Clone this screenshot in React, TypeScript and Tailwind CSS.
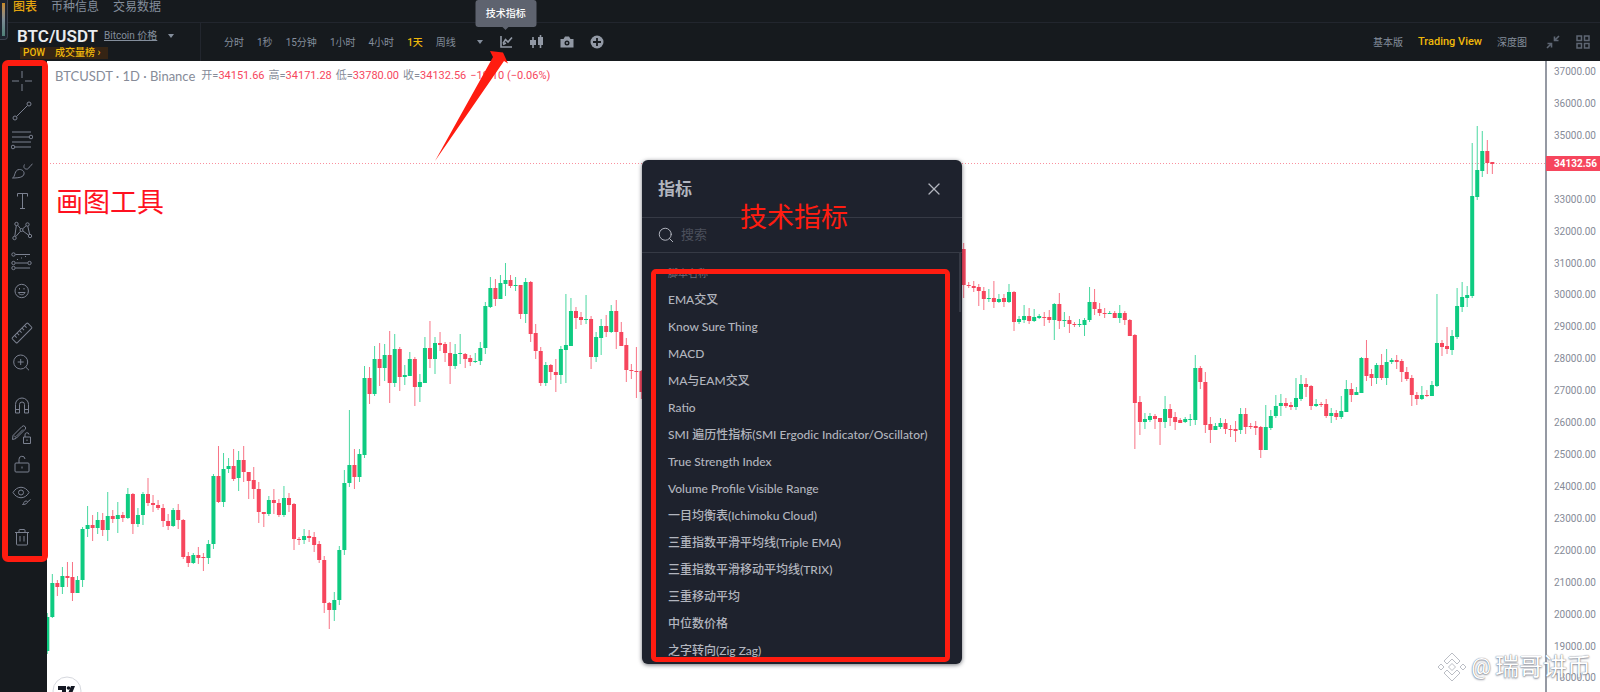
import React, { useState } from 'react'
import { Search, X } from 'lucide-react'

type Bar = [dir: 0 | 1, high: number, top: number, bottom: number, low: number]

const UP = '#0ecb81'
const DOWN = '#f6465d'
const BAR_STEP = 5.035
const FIRST_BAR_X = 0.3

// each run starts at a bar index, 1 = rising bar, 0 = falling bar
const runs: { from: number; bars: Bar[] }[] = [
  {
    from: 0,
    bars: [
      [1, 613, 617, 651, 654], [1, 574, 583, 617, 618], [0, 580, 583, 587, 596], [1, 567, 576, 587, 594],
      [0, 562, 576, 578, 587], [0, 562, 577, 593, 601], [1, 576, 580, 593, 593], [1, 527, 529, 580, 587],
      [1, 506, 525, 529, 537], [0, 515, 525, 528, 541], [1, 512, 520, 528, 534], [0, 513, 520, 530, 536],
      [1, 492, 516, 530, 541], [0, 510, 516, 519, 523], [1, 502, 515, 519, 533], [0, 512, 515, 518, 522],
      [1, 488, 494, 518, 519], [0, 493, 494, 524, 534], [1, 508, 515, 524, 527], [1, 492, 494, 515, 525],
      [0, 478, 494, 503, 506], [0, 495, 503, 505, 512], [0, 500, 505, 508, 510], [0, 504, 508, 521, 527],
      [0, 514, 521, 526, 530], [1, 508, 510, 526, 527], [0, 504, 510, 520, 529], [0, 519, 520, 557, 559],
      [0, 552, 556, 563, 567], [1, 553, 555, 563, 564], [0, 547, 555, 558, 564], [0, 553, 557, 558, 571],
      [1, 540, 544, 558, 564], [1, 474, 476, 544, 549], [0, 446, 476, 502, 503], [1, 453, 469, 502, 507],
      [1, 458, 466, 469, 473], [0, 449, 466, 479, 481], [1, 451, 460, 478, 491], [0, 446, 460, 472, 482],
      [0, 472, 472, 481, 499], [0, 467, 480, 489, 499], [0, 482, 489, 512, 523], [0, 512, 512, 514, 527],
      [1, 496, 500, 514, 516], [0, 489, 500, 503, 514], [0, 499, 503, 515, 517], [1, 486, 498, 515, 517],
      [0, 493, 498, 505, 512], [0, 503, 504, 539, 550], [0, 537, 539, 540, 545], [1, 529, 536, 540, 544],
      [0, 530, 536, 538, 542], [0, 532, 537, 545, 552], [0, 541, 544, 560, 563], [0, 556, 560, 603, 613],
      [0, 602, 603, 610, 629], [1, 592, 600, 610, 621], [1, 546, 550, 600, 605], [1, 470, 483, 550, 555],
      [1, 410, 465, 483, 487], [0, 449, 465, 477, 489], [1, 449, 454, 477, 482], [1, 366, 378, 455, 458],
      [0, 367, 378, 394, 404], [1, 346, 359, 394, 396], [0, 343, 359, 368, 386], [1, 344, 355, 368, 381],
      [0, 331, 355, 383, 403], [1, 334, 349, 383, 387], [0, 347, 349, 377, 391], [1, 365, 375, 377, 385],
      [1, 352, 359, 376, 376], [0, 357, 359, 387, 406], [1, 374, 382, 387, 402], [1, 337, 348, 383, 383],
      [0, 321, 348, 359, 368], [1, 337, 343, 359, 374], [0, 332, 343, 345, 351], [0, 342, 344, 353, 362],
      [0, 342, 353, 366, 384], [1, 344, 354, 366, 369], [1, 334, 353, 354, 364], [0, 353, 354, 359, 368],
      [0, 355, 358, 362, 366], [1, 353, 361, 362, 363], [1, 342, 348, 361, 365], [1, 302, 306, 348, 354],
      [1, 277, 288, 307, 308], [0, 279, 288, 299, 306], [1, 275, 283, 299, 299], [1, 263, 280, 284, 296],
      [0, 275, 280, 286, 288], [1, 277, 285, 286, 291], [0, 285, 285, 314, 319], [1, 278, 282, 314, 323],
      [0, 281, 282, 334, 342], [0, 324, 333, 351, 359], [0, 347, 351, 383, 386], [1, 362, 365, 383, 386],
      [0, 364, 365, 372, 380], [0, 359, 372, 375, 392], [1, 346, 349, 375, 384], [1, 294, 345, 350, 383],
      [1, 298, 311, 346, 346], [0, 307, 311, 318, 329], [0, 312, 317, 320, 325], [1, 295, 319, 320, 324],
      [0, 316, 319, 357, 369], [1, 332, 337, 357, 362], [1, 319, 326, 338, 355], [0, 315, 326, 332, 337],
      [1, 305, 311, 332, 333], [0, 300, 311, 332, 349], [0, 322, 332, 346, 346], [0, 338, 345, 370, 382],
      [0, 364, 370, 371, 379], [0, 347, 371, 372, 398], [0, 370, 371, 392, 399],
    ],
  },
  {
    from: 182,
    bars: [
      [0, 243, 249, 285, 298], [0, 282, 285, 286, 288], [0, 281, 286, 288, 292], [0, 284, 287, 291, 306],
      [0, 287, 291, 299, 310], [1, 289, 298, 299, 302], [0, 281, 298, 302, 308], [1, 294, 299, 302, 303],
      [0, 294, 298, 302, 307], [1, 284, 292, 302, 303], [0, 291, 292, 322, 331], [1, 316, 319, 322, 324],
      [1, 305, 316, 320, 323], [0, 308, 316, 321, 324], [1, 309, 317, 321, 322], [1, 314, 316, 318, 319],
      [0, 312, 317, 318, 326], [0, 310, 317, 320, 323], [1, 303, 304, 320, 340], [0, 293, 304, 321, 329],
      [1, 312, 320, 321, 327], [0, 316, 320, 324, 333], [0, 322, 324, 325, 327], [1, 319, 324, 325, 327],
      [1, 318, 320, 325, 336], [1, 287, 302, 320, 322], [0, 289, 302, 309, 315], [0, 303, 309, 313, 316],
      [0, 308, 313, 314, 318], [1, 311, 313, 314, 314], [0, 311, 313, 318, 318], [1, 305, 313, 318, 323],
      [0, 311, 313, 320, 325], [0, 319, 320, 336, 336], [0, 334, 335, 403, 449], [0, 396, 402, 422, 435],
      [1, 413, 419, 422, 429], [1, 413, 416, 420, 422], [0, 414, 416, 419, 429], [0, 418, 418, 422, 445],
      [1, 396, 409, 422, 428], [0, 404, 409, 418, 426], [0, 412, 417, 422, 430], [0, 418, 420, 423, 423],
      [1, 417, 419, 422, 423], [1, 414, 419, 420, 426], [1, 355, 368, 420, 425], [0, 366, 368, 382, 389],
      [0, 372, 382, 425, 433], [0, 417, 424, 430, 443], [1, 423, 426, 430, 430], [1, 418, 423, 427, 429],
      [0, 419, 423, 429, 434], [0, 425, 429, 430, 437], [0, 421, 429, 431, 442], [1, 408, 414, 430, 434],
      [0, 408, 414, 427, 434], [0, 423, 426, 427, 429], [0, 421, 426, 428, 435], [0, 426, 427, 450, 458],
      [1, 405, 427, 450, 450], [1, 410, 416, 428, 430], [1, 395, 406, 416, 418], [1, 394, 403, 406, 416],
      [0, 398, 403, 406, 408], [0, 402, 405, 407, 410], [1, 378, 398, 407, 410], [1, 375, 384, 399, 401],
      [0, 378, 384, 387, 397], [0, 385, 386, 406, 410], [1, 399, 404, 406, 407], [0, 402, 404, 405, 407],
      [0, 399, 404, 416, 418], [1, 408, 413, 416, 423], [0, 410, 413, 417, 420], [1, 396, 411, 417, 419],
      [1, 380, 389, 412, 412], [0, 383, 389, 395, 402], [1, 387, 392, 395, 395], [1, 357, 358, 393, 393],
      [0, 340, 358, 376, 381], [0, 369, 374, 378, 386], [1, 363, 365, 378, 384], [0, 354, 365, 378, 380],
      [1, 349, 362, 378, 385], [1, 358, 360, 362, 364], [0, 355, 360, 362, 369], [0, 359, 361, 372, 382],
      [0, 367, 372, 379, 381], [0, 375, 378, 395, 406], [0, 392, 395, 399, 405], [1, 386, 395, 399, 400],
      [0, 390, 395, 396, 397], [1, 381, 385, 396, 396], [1, 294, 343, 386, 387], [0, 340, 343, 347, 356],
      [0, 327, 346, 349, 354], [1, 330, 336, 350, 355], [1, 288, 306, 337, 339], [1, 282, 297, 307, 312],
      [1, 286, 295, 298, 307], [1, 143, 196, 296, 298], [1, 126, 170, 197, 200], [1, 131, 151, 171, 177],
      [0, 140, 151, 163, 174], [0, 162, 162, 164, 174],
    ],
  },
]

const indicators = [
  'EMA交叉',
  'Know Sure Thing',
  'MACD',
  'MA与EAM交叉',
  'Ratio',
  'SMI 遍历性指标(SMI Ergodic Indicator/Oscillator)',
  'True Strength Index',
  'Volume Profile Visible Range',
  '一目均衡表(Ichimoku Cloud)',
  '三重指数平滑平均线(Triple EMA)',
  '三重指数平滑移动平均线(TRIX)',
  '三重移动平均',
  '中位数价格',
  '之字转向(Zig Zag)',
]

const intervals = ['分时', '1秒', '15分钟', '1小时', '4小时', '1天', '周线']

const prices = Array.from({ length: 20 }, (_, i) => 37000 - i * 1000).filter((p) => p !== 34000)

const toolGroups: { label: string; icon: React.ReactNode }[][] = [
  [
    { label: '十字线', icon: <path d="M11 1v7M11 14v7M1 11h7M14 11h7" /> },
    {
      label: '趋势线',
      icon: (
        <>
          <circle cx="4" cy="18" r="2" />
          <circle cx="18" cy="4" r="2" />
          <path d="M5.5 16.5l11-11" />
        </>
      ),
    },
    {
      label: '斐波那契',
      icon: (
        <>
          <circle cx="20" cy="7" r="1.8" />
          <circle cx="2" cy="17" r="1.8" />
          <path d="M1 2h19M1 7h17M1 12h19M4 17h16" />
        </>
      ),
    },
    {
      label: '画笔',
      icon: <path d="M1.500 18c3-1 1.500-8.500 7-8.500 3 0 5 2 4.500 4.500-.6 3-4.500 4-11.500 4zM13.500 4.500c-1.500 3 0 5 3 4.500 1.500-.5 2.500-3.500 5-5" />,
    },
    { label: '文字', icon: <path d="M6.500 6.500v-3h10v3M11.500 3.500v15M9 18.500h5" /> },
    {
      label: '形态',
      icon: (
        <>
          <circle cx="5.500" cy="4" r="1.700" />
          <circle cx="16.500" cy="4.500" r="1.700" />
          <circle cx="10.500" cy="10" r="1.500" />
          <circle cx="3.500" cy="18" r="1.700" />
          <circle cx="19" cy="16" r="1.700" />
          <path d="M5.300 5.700L3.800 16.300M6.800 5.300l2.700 3.500M15.200 5.700l-3.600 3.200M16.800 6.200l1.800 8.100M9.500 11.200l-4.800 5.500M11.800 10.900l5.700 4.200" />
        </>
      ),
    },
    {
      label: '预测',
      icon: (
        <>
          <circle cx="2.500" cy="4.500" r="1.700" />
          <circle cx="2.500" cy="13" r="1.700" />
          <circle cx="18.500" cy="13" r="1.700" />
          <circle cx="2.500" cy="18" r="1.700" />
          <path d="M4.500 4.500h14.500M4.500 13h12M4.500 18h14.500" />
          <path d="M6 9.500h2M10 8h2M14 6.500h2" strokeDasharray="1 1" />
        </>
      ),
    },
    {
      label: '表情',
      icon: (
        <>
          <circle cx="10.700" cy="11" r="6.700" />
          <path d="M7.300 12.500c1.300 3 5.500 3 6.800 0z" />
          <path d="M8 8.800h1M12.500 8.800h1" strokeWidth="1.500" />
        </>
      ),
    },
  ],
  [
    {
      label: '测量',
      icon: (
        <g transform="rotate(-45 11 11)">
          <rect x="0" y="7.500" width="22" height="7" rx="1" />
          <path d="M4 7.500v3M7.500 7.500v3M11 7.500v3M14.500 7.500v3M18 7.500v3" />
        </g>
      ),
    },
    {
      label: '放大',
      icon: (
        <>
          <circle cx="9.700" cy="10" r="7" />
          <path d="M9.700 7v6M6.700 10h6M14.700 15l3.300 3.300" />
        </>
      ),
    },
  ],
  [
    {
      label: '磁铁',
      icon: <path d="M4.500 19v-8.500a6.500 6.500 0 0 1 13 0V19h-4v-8.500a2.500 2.500 0 0 0-5 0V19zM4.500 15.500h4M13.500 15.500h4" />,
    },
    {
      label: '保持绘图',
      icon: <path d="M1.500 15.500l.5-4 9-9a2 2 0 0 1 3 3l-9 9zM3 11.500l2.500 2.500M5 12.500l7-7M12.500 13h7v6.500h-7zM14 13v-2a2 2 0 0 1 4-.500M16 15.500v1.500" />,
    },
    {
      label: '锁定',
      icon: <path d="M5 9h12a1 1 0 0 1 1 1v7a1 1 0 0 1-1 1H5a1 1 0 0 1-1-1v-7a1 1 0 0 1 1-1zM8 9V5.500a3 3 0 0 1 6-.500M11 12.500v2" />,
    },
    {
      label: '隐藏',
      icon: (
        <>
          <path d="M2 8.500c4-7 12-7 16 0-4 7-12 7-16 0z" />
          <circle cx="10" cy="8.500" r="2.500" />
          <path d="M11.500 20.500c1.500-.5 1-3.500 3.500-3.500s2 3.500-3.500 3.500zM16.500 18l3-2.500" />
        </>
      ),
    },
  ],
  [
    {
      label: '删除',
      icon: <path d="M4 6.500h14M5.500 6.500V18a1 1 0 0 0 1 1h9a1 1 0 0 0 1-1V6.500M8 6.500v-2a1 1 0 0 1 1-1h4a1 1 0 0 1 1 1v2M9 10v5.500M13 10v5.500" />,
    },
  ],
]

function Caret() {
  return (
    <svg width="8" height="6" viewBox="0 0 8 6" fill="#848e9c">
      <path d="M1 1h6L4 5z" />
    </svg>
  )
}

function Header() {
  const [interval, setInterval] = useState('1天')

  return (
    <header className="relative shrink-0 bg-[#161a1e] text-[#848e9c]">
      <nav className="flex h-[23px] items-start gap-[14px] border-b border-[#22262e] pl-[13px] text-[12px] leading-[14px]">
        <a href="#chart" className="font-medium text-[#e5a50f]">图表</a>
        <a href="#info">币种信息</a>
        <a href="#data">交易数据</a>
      </nav>
      <div className="flex h-[38px] items-stretch">
        <div className="flex w-[201px] shrink-0 flex-col border-r border-[#22262e] pt-[2px] pl-[17px]">
          <div className="flex items-center">
            <h1 className="text-[17px] leading-[22px] font-semibold text-[#eaecef]">BTC/USDT</h1>
            <a href="#price" className="ml-[6px] text-[10px] leading-[16px] whitespace-nowrap underline">Bitcoin 价格</a>
            <button aria-label="选择交易对" className="ml-[10px]"><Caret /></button>
          </div>
          <div className="ml-[3px] flex h-3 w-[88px] items-center gap-[10px] bg-[#352414] pl-[3px] text-[10px] leading-[12px] font-medium text-[#f0b90b]">
            <a href="#pow">POW</a>
            <a href="#rank" className="whitespace-nowrap">成交量榜 ›</a>
          </div>
        </div>
        <div className="flex flex-1 items-center gap-[13px] pl-[23px] text-[10px] whitespace-nowrap">
          {intervals.map((item) => (
            <button
              key={item}
              onClick={() => setInterval(item)}
              className={item === interval ? 'font-medium text-[#f0b90b]' : ''}
            >
              {item}
            </button>
          ))}
          <button aria-label="更多周期" className="ml-[7px]"><Caret /></button>
          <div className="ml-[2px] flex items-center gap-4">
            <button aria-label="技术指标" className="relative">
              <svg width="14" height="14" viewBox="0 0 14 14" fill="none" stroke="#9299a5" strokeWidth="1.6">
                <path d="M2 1v11h11M4 8.500l2.500-4L9 7l4-4.500M4 9.500l3-1.500" />
              </svg>
              <span className="absolute -top-[35px] left-1/2 flex h-[27px] w-[61px] -translate-x-1/2 items-center justify-center rounded-[3px] bg-[#5e636f] text-[10px] font-medium text-white">
                技术指标
                <span className="absolute -bottom-[2px] left-1/2 size-[5px] -translate-x-1/2 rotate-45 bg-[#5e636f]" />
              </span>
            </button>
            <button aria-label="K线样式">
              <svg width="15" height="14" viewBox="0 0 15 14" fill="#9299a5">
                <path d="M3.200 2h1.600v3H7v5H4.800v3H3.200v-3H1V5h2.200zM10.700 0h1.600v2H14v8h-1.700v3h-1.600v-3H9V2h1.700z" />
              </svg>
            </button>
            <button aria-label="截图">
              <svg width="14" height="14" viewBox="0 0 14 14" fill="#9299a5">
                <path fillRule="evenodd" d="M.5 4h3l1.500-2.500h4L10.500 4h3v8.500H.5zM7 5.500a2.500 2.500 0 1 0 0 5 2.500 2.500 0 0 0 0-5z" />
                <circle cx="7" cy="8" r="1" />
              </svg>
            </button>
            <button aria-label="添加">
              <svg width="14" height="14" viewBox="0 0 14 14">
                <circle cx="7" cy="7" r="6.500" fill="#9299a5" />
                <path d="M7 3v8M3 7h8" stroke="#161a1e" strokeWidth="1.800" />
              </svg>
            </button>
          </div>
        </div>
        <div className="flex items-center gap-[15px] pr-[10px] text-[10px] whitespace-nowrap">
          <button>基本版</button>
          <button className="text-[11px] font-medium text-[#f0b90b]">Trading View</button>
          <button>深度图</button>
          <button aria-label="缩小" className="ml-1">
            <svg width="14" height="14" viewBox="0 0 14 14" fill="none" stroke="#5e6673" strokeWidth="1.600">
              <path d="M13 1L8.500 5.500M8.500 1.500v4h4M1 13l4.500-4.500M5.500 12.500v-4h-4" />
            </svg>
          </button>
          <button aria-label="布局" className="ml-[1px]">
            <svg width="14" height="14" viewBox="0 0 14 14" fill="none" stroke="#5e6673" strokeWidth="1.500">
              <path d="M1 1h4.500v4.500H1zM8.500 1H13v4.500H8.500zM1 8.500h4.500V13H1zM8.500 8.500H13V13H8.500z" />
            </svg>
          </button>
        </div>
      </div>
      <span className="absolute top-0 left-0 flex h-[40px] w-[8px] justify-center rounded-br border-r border-b border-[#3d4350] bg-[#1e2430]">
        <span className="mt-[3px] h-[33px] w-[3px] bg-linear-to-b from-[#c98a1c] via-[#7c8a94] to-[#4e7f78]" />
      </span>
    </header>
  )
}

function Toolbar() {
  return (
    <aside className="relative flex w-[47px] shrink-0 flex-col gap-3 bg-[#161a1e] pt-[5px]">
      {toolGroups.map((group, i) => (
        <div key={i} className="flex flex-col pr-[3px]">
          {group.map((tool) => (
            <button key={tool.label} aria-label={tool.label} className="flex h-[30px] items-center justify-center">
              <svg width="22" height="22" viewBox="0 0 22 22" fill="none" stroke="#7b8190" strokeWidth="1">
                {tool.icon}
              </svg>
            </button>
          ))}
        </div>
      ))}
      <div className="pointer-events-none absolute -top-[1px] left-[2px] z-10 h-[502px] w-[46px] rounded-md border-[6px] border-[#ff1c10]" />
    </aside>
  )
}

function Quote({ label, value }: { label: string; value: string }) {
  return (
    <span>
      {label}=<span className="text-[#f6465d]">{value}</span>
    </span>
  )
}

function Chart() {
  return (
    <main className="relative min-w-0 flex-1 overflow-hidden bg-white">
      <svg className="absolute inset-0 h-full w-full" role="img" aria-label="BTCUSDT K线图">
        <line x1="0" x2="100%" y1="102.500" y2="102.500" stroke="#f6465d" strokeOpacity="0.6" strokeDasharray="1 2" />
        <g transform="translate(0 -61)">
          {runs.map((run) =>
            run.bars.map(([dir, high, top, bottom, low], i) => {
              const x = FIRST_BAR_X + (run.from + i) * BAR_STEP
              const color = dir ? UP : DOWN
              return (
                <g key={run.from + i} fill={color}>
                  <rect x={x - 0.5} y={high} width="1" height={low - high} fillOpacity="0.75" />
                  <rect x={x - 2} y={top} width="4" height={Math.max(bottom - top, 1)} />
                </g>
              )
            }),
          )}
        </g>
      </svg>
      <div className="relative flex items-center gap-1 pt-[6px] pl-2 text-[11px] leading-[18px] whitespace-nowrap text-[#868b98]">
        <span className="mr-[2px] font-['Lato',sans-serif] text-[13px]">BTCUSDT · 1D · Binance</span>
        <Quote label="开" value="34151.66" />
        <Quote label="高" value="34171.28" />
        <Quote label="低" value="33780.00" />
        <Quote label="收" value="34132.56" />
        <span className="text-[#f6465d]">−19.10 (−0.06%)</span>
      </div>
      <p className="absolute top-[124px] left-[9px] text-[27px] leading-[36px] text-[#ff1020]">画图工具</p>
      <svg className="absolute -bottom-[14px] left-[5px]" width="30" height="30" viewBox="0 0 30 30">
        <circle cx="15" cy="15" r="14" fill="#fff" stroke="#d6d8de" />
        <path d="M6 10h8v10h-4v-6H6zM19 10h4l-4 10h-4z" fill="#131722" />
        <circle cx="16.500" cy="12" r="1.800" fill="#131722" />
      </svg>
    </main>
  )
}

function PriceAxis() {
  return (
    <div className="relative w-[55px] shrink-0 border-l-2 border-[#9599a3] bg-white">
      <svg className="h-full w-full text-[10px]" fill="#868b98" aria-label="价格">
        {prices.map((price) => (
          <text key={price} x="7" y={14 + ((37000 - price) / 1000) * 31.92}>
            {price.toFixed(2)}
          </text>
        ))}
      </svg>
      <span className="absolute top-[95px] -left-[1px] right-0 bg-[#f6465d] pl-2 text-[10px] leading-[15px] font-bold text-white">
        34132.56
      </span>
    </div>
  )
}

function IndicatorDialog() {
  const [query, setQuery] = useState('')

  return (
    <section
      role="dialog"
      aria-labelledby="indicator-title"
      className="absolute top-[160px] left-[642px] z-20 flex h-[504px] w-[320px] flex-col overflow-hidden rounded-md bg-[#1e222d] font-['Lato','Noto_Sans_CJK_SC',sans-serif] text-[#b2b5be] shadow-[0_1px_4px_rgba(20,24,34,0.6)]"
    >
      <div className="flex h-[58px] shrink-0 items-center justify-between border-b border-[#363a45] px-4">
        <h2 id="indicator-title" className="text-[17px] font-bold">指标</h2>
        <button aria-label="关闭" className="mr-[2px]">
          <X size={20} strokeWidth={1.5} />
        </button>
      </div>
      <label className="flex h-[35px] shrink-0 items-center gap-[6px] border-b border-[#363a45] px-[15px]">
        <Search size={18} strokeWidth={1.3} />
        <input
          type="text"
          aria-label="搜索"
          placeholder="搜索"
          value={query}
          onChange={(e) => setQuery(e.target.value)}
          className="min-w-0 flex-1 bg-transparent text-[13px] outline-none placeholder:text-[#4c505c]"
        />
      </label>
      <div className="flex-1 overflow-hidden pt-3 pl-[26px]">
        <p className="h-[21px] text-[10px] leading-[16px] text-[#6a6e79]">脚本名称</p>
        <ul className="text-[12px] font-medium">
          {indicators.map((name) => (
            <li key={name} className="h-[27px] leading-[27px] whitespace-nowrap">
              <button>{name}</button>
            </li>
          ))}
        </ul>
      </div>
      <span className="absolute top-[93px] right-[1px] h-[59px] w-[2px] bg-[#363a45]" />
      <div className="pointer-events-none absolute top-[109px] left-[9px] h-[393px] w-[299px] rounded-[5px] border-[5px] border-[#ff1c10]" />
      <p className="pointer-events-none absolute top-[39px] left-[98px] text-[27px] leading-[36px] text-[#ff1c10]">
        技术指标
      </p>
    </section>
  )
}

function Watermark() {
  return (
    <div className="pointer-events-none absolute right-[9px] bottom-[9px] z-10 flex items-center gap-1 text-[24px] leading-[32px] text-white [text-shadow:0_0_1px_#5c6170,0_1px_2px_#8a8f9b]">
      <svg width="30" height="30" viewBox="0 0 30 30" fill="#fff" stroke="#a9adb6" strokeWidth="0.8">
        <path d="M15 1l8 8-3 3-5-5-5 5-3-3zM15 29l-8-8 3-3 5 5 5-5 3 3zM4 12l3 3-3 3-3-3zM26 12l3 3-3 3-3-3zM15 11.500l3.500 3.500-3.500 3.500-3.500-3.500z" />
      </svg>
      <span className="text-[22px]">@</span>
      <span>瑞哥讲币</span>
    </div>
  )
}

export default function App() {
  return (
    <div className="relative flex h-screen flex-col overflow-hidden bg-white font-['Roboto','Noto_Sans_CJK_SC',sans-serif]">
      <Header />
      <div className="flex min-h-0 flex-1">
        <Toolbar />
        <Chart />
        <PriceAxis />
      </div>
      <IndicatorDialog />
      <Watermark />
      {/* pointer from the chart up to the indicator button */}
      <svg className="pointer-events-none absolute top-[50px] left-[434px] z-20" width="76" height="112" viewBox="434 50 76 112">
        <path d="M435 161L493 57l-3-6 13 1.500 5 11-4-2.500z" fill="#ff1c10" />
      </svg>
    </div>
  )
}
